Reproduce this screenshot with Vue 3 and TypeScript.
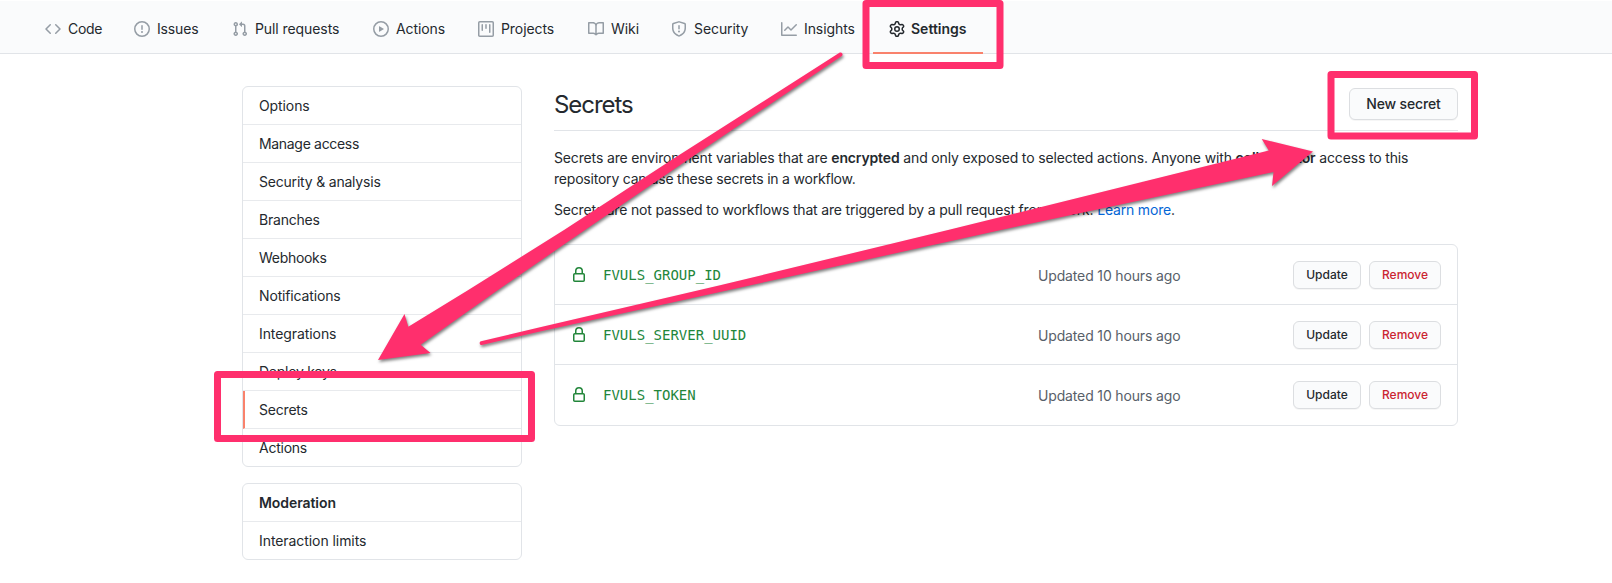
<script setup lang="ts">
interface Tab {
  label: string
  icon: string
  cls: string
}

interface MenuEntry {
  label: string
  tracking: number
}

const icons: Record<string, string> = {
  code: 'M4.72 3.22a.75.75 0 011.06 1.06L2.06 8l3.72 3.72a.75.75 0 11-1.06 1.06L.47 8.53a.75.75 0 010-1.06l4.25-4.25zm6.56 0a.75.75 0 10-1.06 1.06L13.94 8l-3.72 3.72a.75.75 0 101.06 1.06l4.25-4.25a.75.75 0 000-1.06l-4.25-4.25z',
  issues: 'M8 1.5a6.5 6.5 0 100 13 6.5 6.5 0 000-13zM0 8a8 8 0 1116 0A8 8 0 010 8zm9 3a1 1 0 11-2 0 1 1 0 012 0zm-.25-6.25a.75.75 0 00-1.5 0v3.5a.75.75 0 001.5 0v-3.5z',
  pulls: 'M7.177 3.073L9.573.677A.25.25 0 0110 .854v4.792a.25.25 0 01-.427.177L7.177 3.427a.25.25 0 010-.354zM3.75 2.5a.75.75 0 100 1.5.75.75 0 000-1.5zm-2.25.75a2.25 2.25 0 113 2.122v5.256a2.251 2.251 0 11-1.5 0V5.372A2.25 2.25 0 011.5 3.25zM11 2.5h-1V4h1a1 1 0 011 1v5.628a2.251 2.251 0 101.5 0V5A2.5 2.5 0 0011 2.5zm1 10.25a.75.75 0 111.5 0 .75.75 0 01-1.5 0zM3.75 12a.75.75 0 100 1.5.75.75 0 000-1.5z',
  actions: 'M1.5 8a6.5 6.5 0 1113 0 6.5 6.5 0 01-13 0zM8 0a8 8 0 100 16A8 8 0 008 0zM6.379 5.227A.25.25 0 006 5.442v5.117a.25.25 0 00.379.214l4.264-2.559a.25.25 0 000-.428L6.379 5.227z',
  projects: 'M1.75 0A1.75 1.75 0 000 1.75v12.5C0 15.216.784 16 1.75 16h12.5A1.75 1.75 0 0016 14.25V1.75A1.75 1.75 0 0014.25 0H1.75zM1.5 1.75a.25.25 0 01.25-.25h12.5a.25.25 0 01.25.25v12.5a.25.25 0 01-.25.25H1.75a.25.25 0 01-.25-.25V1.75zM11.75 3a.75.75 0 00-.75.75v7.5a.75.75 0 001.5 0v-7.5a.75.75 0 00-.75-.75zm-8.25.75a.75.75 0 011.5 0v5.5a.75.75 0 01-1.5 0v-5.5zM8 3a.75.75 0 00-.75.75v3.5a.75.75 0 001.5 0v-3.5A.75.75 0 008 3z',
  wiki: 'M0 1.75A.75.75 0 01.75 1h4.253c1.227 0 2.317.59 3 1.501A3.744 3.744 0 0111.006 1h4.245a.75.75 0 01.75.75v10.5a.75.75 0 01-.75.75h-4.507a2.25 2.25 0 00-1.591.659l-.622.621a.75.75 0 01-1.06 0l-.622-.621A2.25 2.25 0 005.258 13H.75a.75.75 0 01-.75-.75V1.75zm8.755 3a2.25 2.25 0 012.25-2.25H14.5v9h-3.757c-.71 0-1.4.201-1.992.572l.004-7.322zm-1.504 7.324l.004-5.073-.002-2.253A2.25 2.25 0 005.003 2.5H1.5v9h3.757a3.75 3.75 0 011.994.574z',
  security: 'M7.467.133a1.75 1.75 0 011.066 0l5.25 1.68A1.75 1.75 0 0115 3.48V7c0 1.566-.32 3.182-1.303 4.682-.983 1.498-2.585 2.813-5.032 3.855a1.7 1.7 0 01-1.33 0c-2.447-1.042-4.049-2.357-5.032-3.855C1.32 10.182 1 8.566 1 7V3.48a1.75 1.75 0 011.217-1.667l5.25-1.68zm.61 1.429a.25.25 0 00-.153 0l-5.25 1.68a.25.25 0 00-.174.238V7c0 1.358.275 2.666 1.057 3.86.784 1.194 2.121 2.34 4.366 3.297a.2.2 0 00.154 0c2.245-.956 3.582-2.104 4.366-3.298C13.225 9.666 13.5 8.36 13.5 7V3.48a.25.25 0 00-.174-.237l-5.25-1.68zM9 10.5a1 1 0 11-2 0 1 1 0 012 0zm-.25-5.75a.75.75 0 10-1.5 0v3a.75.75 0 001.5 0v-3z',
  insights: 'M1.5 1.75a.75.75 0 00-1.5 0v12.5c0 .414.336.75.75.75h14.5a.75.75 0 000-1.5H1.5V1.75zm14.28 2.53a.75.75 0 00-1.06-1.06L10 7.94 7.53 5.47a.75.75 0 00-1.06 0L3.22 8.72a.75.75 0 001.06 1.06L7 7.06l2.47 2.47a.75.75 0 001.06 0l5.25-5.25z',
  settings: 'M7.429 1.525a6.593 6.593 0 011.142 0c.036.003.108.036.137.146l.289 1.105c.147.56.55.967.997 1.189.174.086.341.183.501.29.417.278.97.423 1.53.27l1.102-.303c.11-.03.175.016.195.046.219.31.41.641.573.989.014.031.022.11-.059.19l-.815.806c-.411.406-.562.957-.53 1.456a4.588 4.588 0 010 .582c-.032.499.119 1.05.53 1.456l.815.806c.08.08.073.159.059.19a6.494 6.494 0 01-.573.99c-.02.029-.086.074-.195.045l-1.103-.303c-.559-.153-1.112-.008-1.529.27-.16.107-.327.204-.5.29-.449.222-.851.628-.998 1.189l-.289 1.105c-.029.11-.101.143-.137.146a6.613 6.613 0 01-1.142 0c-.036-.003-.108-.037-.137-.146l-.289-1.105c-.147-.56-.55-.967-.997-1.189a4.502 4.502 0 01-.501-.29c-.417-.278-.97-.423-1.53-.27l-1.102.303c-.11.03-.175-.016-.195-.046a6.492 6.492 0 01-.573-.989c-.014-.031-.022-.11.059-.19l.815-.806c.411-.406.562-.957.53-1.456a4.587 4.587 0 010-.582c.032-.499-.119-1.05-.53-1.456l-.815-.806c-.08-.08-.073-.159-.059-.19a6.44 6.44 0 01.573-.99c.02-.029.086-.075.195-.045l1.103.303c.559.153 1.112.008 1.529-.27.16-.107.327-.204.5-.29.449-.222.851-.628.998-1.189l.289-1.105c.029-.11.101-.143.137-.146zM8 0c-.236 0-.47.01-.701.03-.743.065-1.29.615-1.458 1.261l-.29 1.106c-.017.066-.078.158-.211.224a5.994 5.994 0 00-.668.386c-.123.082-.233.09-.3.071L3.27 2.776c-.644-.177-1.392.02-1.82.63a7.977 7.977 0 00-.704 1.217c-.315.675-.111 1.422.363 1.891l.815.806c.05.048.098.147.088.294a6.084 6.084 0 000 .772c.01.147-.038.246-.088.294l-.815.806c-.474.469-.678 1.216-.363 1.891.2.428.436.835.704 1.218.428.609 1.176.806 1.82.63l1.103-.303c.066-.019.176-.011.299.071.213.143.436.272.668.386.133.066.194.158.212.224l.289 1.106c.169.646.715 1.196 1.458 1.26a8.094 8.094 0 001.402 0c.743-.064 1.29-.614 1.458-1.26l.29-1.106c.017-.066.078-.158.211-.224a5.98 5.98 0 00.668-.386c.123-.082.233-.09.3-.071l1.102.302c.644.177 1.392-.02 1.82-.63.268-.382.505-.789.704-1.217.315-.675.111-1.422-.364-1.891l-.814-.806c-.05-.048-.098-.147-.088-.294a6.1 6.1 0 000-.772c-.01-.147.039-.246.088-.294l.814-.806c.475-.469.679-1.216.364-1.891a7.992 7.992 0 00-.704-1.218c-.428-.609-1.176-.806-1.82-.63l-1.103.303c-.066.019-.176.011-.299-.071a5.991 5.991 0 00-.668-.386c-.133-.066-.194-.158-.212-.224L10.16 1.29C9.99.645 9.444.095 8.701.031A8.094 8.094 0 008 0zm1.5 8a1.5 1.5 0 11-3 0 1.5 1.5 0 013 0zM11 8a3 3 0 11-6 0 3 3 0 016 0z',
  lock: 'M4 4v2h-.25A1.75 1.75 0 002 7.75v5.5c0 .966.784 1.75 1.75 1.75h8.5A1.75 1.75 0 0014 13.25v-5.5A1.75 1.75 0 0012.25 6H12V4a4 4 0 10-8 0zm6.5 2V4a2.5 2.5 0 10-5 0v2h5zM12 7.5h.25a.25.25 0 01.25.25v5.5a.25.25 0 01-.25.25h-8.5a.25.25 0 01-.25-.25v-5.5a.25.25 0 01.25-.25H12z',
}

const tabs: Tab[] = [
  { label: 'Code', icon: 'code', cls: 't-code' },
  { label: 'Issues', icon: 'issues', cls: 't-issues' },
  { label: 'Pull requests', icon: 'pulls', cls: 't-pulls' },
  { label: 'Actions', icon: 'actions', cls: 't-actions' },
  { label: 'Projects', icon: 'projects', cls: 't-projects' },
  { label: 'Wiki', icon: 'wiki', cls: 't-wiki' },
  { label: 'Security', icon: 'security', cls: 't-security' },
  { label: 'Insights', icon: 'insights', cls: 't-insights' },
  { label: 'Settings', icon: 'settings', cls: 't-settings' },
]

const menu: MenuEntry[] = [
  { label: 'Options', tracking: -0.1 },
  { label: 'Manage access', tracking: -0.32 },
  { label: 'Security & analysis', tracking: -0.2 },
  { label: 'Branches', tracking: -0.22 },
  { label: 'Webhooks', tracking: -0.3 },
  { label: 'Notifications', tracking: -0.15 },
  { label: 'Integrations', tracking: -0.08 },
  { label: 'Deploy keys', tracking: -0.27 },
  { label: 'Secrets', tracking: -0.2 },
  { label: 'Actions', tracking: -0.25 },
]

const secrets: string[] = ['FVULS_GROUP_ID', 'FVULS_SERVER_UUID', 'FVULS_TOKEN']
</script>

<template>
  <div class="page">
    <nav class="tabs">
      <a v-for="t in tabs" :key="t.label" class="tab" :class="[t.cls, { selected: t.label === 'Settings' }]">
        <svg class="icon" viewBox="0 0 16 16" width="16" height="16"><path fill-rule="evenodd" :d="icons[t.icon]" /></svg>
        <span>{{ t.label }}</span>
      </a>
    </nav>

    <div class="layout">
      <aside class="side">
        <div class="menu">
          <a
            v-for="m in menu"
            :key="m.label"
            class="menu-item"
            :class="{ current: m.label === 'Secrets' }"
            :style="{ letterSpacing: m.tracking + 'px' }"
          >{{ m.label }}</a>
        </div>
        <div class="menu">
          <span class="menu-item menu-heading">Moderation</span>
          <a class="menu-item">Interaction limits</a>
        </div>
      </aside>

      <main class="main">
        <header class="subhead">
          <h2>Secrets</h2>
          <button class="btn">New secret</button>
        </header>
        <p class="intro">
          Secrets are environment variables that are <b>encrypted</b> and only exposed to selected actions. Anyone with
          <b>collaborator</b> access to this<br /><span class="tight">repository can use these secrets in a workflow.</span>
        </p>
        <p class="note">
          Secrets are not passed to workflows that are triggered by a pull request from a fork. <a class="link">Learn more</a>.
        </p>
        <ul class="list">
          <li v-for="s in secrets" :key="s" class="row">
            <svg class="lock" viewBox="0 0 16 16" width="16" height="16"><path fill-rule="evenodd" :d="icons.lock" /></svg>
            <code>{{ s }}</code>
            <span class="updated">Updated 10 hours ago</span>
            <button class="btn small">Update</button>
            <button class="btn small danger">Remove</button>
          </li>
        </ul>
      </main>
    </div>

    <svg class="marks" viewBox="0 0 1612 583" width="1612" height="583">
      <g class="frames">
        <rect x="866" y="3.5" width="134" height="62" />
        <rect x="217.5" y="374.5" width="314" height="64" />
        <rect x="1331" y="74.5" width="143.5" height="61.5" />
      </g>
      <g class="arrows">
        <path d="M839.8 52.6L674.5 158L564 230L468.3 290L408.3 326.7L404.5 314L378 360L430.5 353L420.7 344.7L498 290L585 230L690.5 158L841.8 56A2 2 0 0 0 839.8 52.6Z" />
        <path d="M481 341.3L540 327.3L720 285.3L948 230L1268.8 150.5L1261.700 139L1313 151.5L1272 186L1273.5 172L1001 230L720 292L540 331.5L481.8 345A1.9 1.9 0 0 1 481 341.3Z" />
      </g>
    </svg>
  </div>
</template>

<style>
body {
  margin: 0;
  background: #fff;
}
</style>

<style scoped>
.page {
  position: relative;
  width: 1612px;
  height: 583px;
  overflow: hidden;
  color: #24292e;
  background: #fff;
  font: 14px/21px Inter, 'Liberation Sans', sans-serif;
}
.tabs {
  display: flex;
  box-sizing: border-box;
  height: 54px;
  padding-left: 29px;
  border-top: 1px solid #fff;
  border-bottom: 1px solid #e1e4e8;
  background: #fafbfc;
}
.tab {
  display: flex;
  box-sizing: border-box;
  height: 53px;
  padding: 4px 0 0 16px;
  gap: 7px;
  align-items: center;
  white-space: nowrap;
  letter-spacing: -0.08px;
  border-bottom: 2px solid transparent;
}
.icon {
  flex: none;
  fill: #959da5;
}
.t-code { width: 89px; letter-spacing: -0.3px; }
.t-issues { width: 98px; letter-spacing: -0.15px; }
.t-pulls { width: 141px; }
.t-actions { width: 105px; }
.t-projects { width: 110px; }
.t-wiki { width: 83px; }
.t-security { width: 110px; }
.t-insights { width: 108px; }
.t-settings { width: 110px; }
.selected {
  gap: 6px;
  font-weight: 600;
  letter-spacing: 0;
  border-bottom-color: #f9826c;
}
.selected .icon {
  fill: #24292e;
}
.layout {
  display: flex;
  gap: 32px;
  padding: 32px 0 0 242px;
}
.side {
  display: flex;
  flex-direction: column;
  gap: 16px;
  width: 280px;
}
.menu {
  box-sizing: border-box;
  border: 1px solid #e1e4e8;
  border-radius: 6px;
  overflow: hidden;
}
.menu-item {
  display: block;
  box-sizing: border-box;
  height: 38px;
  padding: 8px 16px;
  letter-spacing: -0.07px;
  border-bottom: 1px solid #e8eaed;
}
.menu-item:last-child {
  height: 37px;
  border-bottom: 0;
}
.current {
  padding-left: 14px;
  border-left: 2px solid #f9826c;
}
.menu-heading {
  font-weight: 600;
}
.main {
  width: 904px;
}
.subhead {
  display: flex;
  box-sizing: border-box;
  height: 45px;
  padding-top: 2px;
  align-items: flex-start;
  justify-content: space-between;
  border-bottom: 1px solid #e1e4e8;
  margin-bottom: 16px;
}
h2 {
  margin: 0;
  font-size: 24px;
  font-weight: 400;
  line-height: 34px;
  letter-spacing: -1.05px;
}
p {
  margin: 0 0 10px;
  white-space: nowrap;
}
.intro {
  letter-spacing: -0.148px;
}
.tight {
  letter-spacing: -0.21px;
}
.note {
  letter-spacing: -0.18px;
}
b {
  font-weight: 600;
}
.link {
  color: #0366d6;
}
.btn {
  box-sizing: border-box;
  width: 109px;
  height: 32px;
  padding: 0;
  font: 500 14px/20px Inter, 'Liberation Sans', sans-serif;
  letter-spacing: -0.15px;
  color: #24292e;
  background: #fafbfc;
  border: 1px solid #dcdee1;
  border-radius: 6px;
  box-shadow: 0 1px 0 rgba(27, 31, 35, 0.04);
}
.list {
  margin: 24px 0 0;
  padding: 0;
  list-style: none;
  border: 1px solid #e1e4e8;
  border-radius: 6px;
}
.row {
  display: flex;
  align-items: center;
  padding: 16px 16px 15px;
}
.row + .row {
  border-top: 1px solid #e1e4e8;
}
.row:last-child {
  padding-bottom: 16px;
}
.lock {
  flex: none;
  fill: #22863a;
}
code {
  width: 435px;
  margin-left: 16px;
  font: 14px/20px 'DejaVu Sans Mono', monospace;
  color: #22863a;
}
.updated {
  flex: 1;
  padding-top: 1px;
  color: #586069;
  letter-spacing: -0.15px;
  white-space: nowrap;
}
.small {
  width: 68px;
  height: 28px;
  font-size: 12px;
  letter-spacing: 0;
}
.danger {
  width: 72px;
  margin-left: 8px;
  color: #cb2431;
}
.marks {
  position: absolute;
  top: 0;
  left: 0;
  pointer-events: none;
}
.frames rect {
  fill: none;
  stroke: #ff2f6d;
  stroke-width: 7px;
  stroke-linejoin: round;
}
.arrows path {
  fill: #ff2f6d;
  filter: drop-shadow(1px 2px 1.5px rgba(0, 0, 0, 0.5));
}
</style>
